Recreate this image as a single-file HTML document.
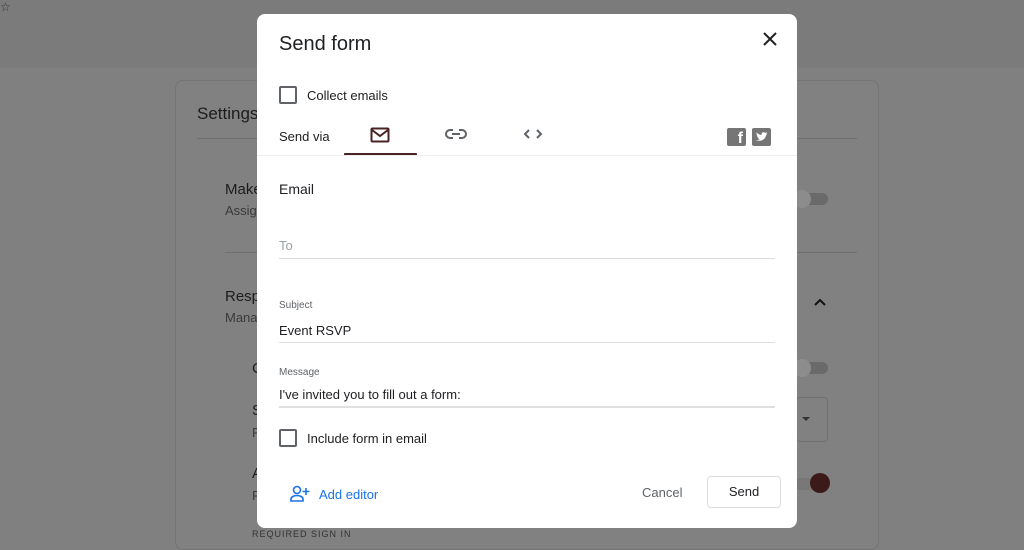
<!DOCTYPE html>
<html><head><meta charset="utf-8"><style>
*{margin:0;padding:0;box-sizing:border-box}
body{width:1024px;height:536px;overflow:hidden;background:#808080;font-family:"Liberation Sans",Arial,sans-serif;position:relative}
.abs{position:absolute}
.top{left:0;top:0;width:1024px;height:68px;background:#7b7b7b}
.card{left:175px;top:80px;width:704px;height:470px;background:#818181;border:1px solid #747474;border-radius:8px}
.t{position:absolute;font-size:15px;color:#1c1c1c}
.s{position:absolute;font-size:13px;color:#3a3a3a}
.hr{position:absolute;height:1px;background:#6f6f6f}
.dlg{left:257px;top:14px;width:540px;height:514px;background:#fff;border-radius:8px;overflow:hidden}
.cb{position:absolute;width:18px;height:18px;border:2px solid #5f6368;border-radius:2px}
.lbl{position:absolute;font-size:13px;color:#202124}
.line{position:absolute;left:22px;width:496px;height:1px;background:#dadce0}
.line2{position:absolute;left:22px;width:496px;height:2px;background:#e0e0e0}
</style></head><body>
<div class="abs top"></div>
<div class="abs" style="left:0;top:0;font-size:12px;color:#333">☆</div>
<div class="abs card"></div>
<div class="t" style="left:197px;top:104px;font-size:17px">Settings</div>
<div class="hr" style="left:197px;top:138px;width:660px"></div>
<div class="t" style="left:225px;top:181px">Make</div>
<div class="s" style="left:225px;top:203px">Assig</div>
<div class="hr" style="left:225px;top:252px;width:632px"></div>
<div class="t" style="left:225px;top:288px">Resp</div>
<div class="s" style="left:225px;top:310px">Mana</div>
<div class="t" style="left:252px;top:360px">C</div>
<div class="t" style="left:252px;top:402px">S</div>
<div class="s" style="left:252px;top:425px">F</div>
<div class="t" style="left:252px;top:465px">A</div>
<div class="s" style="left:252px;top:488px">F</div>
<div class="abs" style="left:792px;top:193px;width:36px;height:12px;border-radius:6px;background:#6a6a6a"></div>
<div class="abs" style="left:793px;top:190px;width:18px;height:18px;border-radius:50%;background:#8c8c8c"></div>
<div class="abs" style="left:792px;top:362px;width:36px;height:12px;border-radius:6px;background:#6a6a6a"></div>
<div class="abs" style="left:793px;top:359px;width:18px;height:18px;border-radius:50%;background:#8c8c8c"></div>
<div class="abs" style="left:796px;top:397px;width:32px;height:45px;border:1px solid #707070;border-radius:4px"></div>
<div class="abs" style="left:802px;top:417px;width:0;height:0;border-left:4px solid transparent;border-right:4px solid transparent;border-top:4px solid #333"></div>
<div class="abs" style="left:792px;top:478px;width:36px;height:12px;border-radius:6px;background:#787878"></div>
<div class="abs" style="left:810px;top:473px;width:20px;height:20px;border-radius:50%;background:#3c1a1a"></div>
<svg class="abs" style="left:813px;top:297px" width="14" height="10"><path d="M2 8 L7 3 L12 8" fill="none" stroke="#111" stroke-width="2"/></svg>

<div class="abs dlg">
  <div class="abs" style="left:22px;top:19px;font-size:20px;color:#202124">Send form</div>
  <svg class="abs" style="left:506px;top:18px" width="14" height="14"><path d="M1 1L13 13M13 1L1 13" stroke="#202124" stroke-width="2"/></svg>
  <div class="cb" style="left:22px;top:72px"></div>
  <div class="lbl" style="left:50px;top:74px">Collect emails</div>
  <div class="lbl" style="left:22px;top:115px">Send via</div>
  <svg class="abs" style="left:113px;top:113px" width="20" height="16"><rect x="1.5" y="1.5" width="17" height="13" rx="1" fill="none" stroke="#4a2424" stroke-width="2"/><path d="M2 3 L10 9 L18 3" fill="none" stroke="#4a2424" stroke-width="2"/></svg>
  <div class="abs" style="left:87px;top:139px;width:73px;height:3px;background:#4a2424;border-radius:1px"></div>
  <svg class="abs" style="left:188px;top:114px" width="22" height="12"><path d="M8 2H5a4 4 0 0 0 0 8h3M14 2h3a4 4 0 0 1 0 8h-3M7 6h8" fill="none" stroke="#5f6368" stroke-width="2"/></svg>
  <svg class="abs" style="left:266px;top:114px" width="20" height="12"><path d="M6 2L2 6L6 10M14 2L18 6L14 10" fill="none" stroke="#5f6368" stroke-width="2"/></svg>
  <div class="abs" style="left:470px;top:114px;width:19px;height:18px;background:#757575;border-radius:2px;color:#fff;font-weight:bold;font-size:16px;text-align:right;padding-right:3px;line-height:21px">f</div>
  <svg class="abs" style="left:495px;top:114px" width="19" height="18"><rect width="19" height="18" rx="2" fill="#757575"/><path d="M4 12c3 1.5 8 1 10-4 0-1 1-2 1.5-2.5l-1.5.3c.5-.5 1-1 1-1.5l-1.8.6c-1.5-1.5-4-.5-3.5 2-2 0-4-1-5-2.5-.5 1 0 2.5 1 3l-1-.2c0 1 1 2 2 2.3h-1c.3 1 1.3 1.5 2.2 1.5-1 .8-2.5 1.2-3.9 1z" fill="#fff"/></svg>
  <div class="abs" style="left:0;top:141px;width:540px;height:1px;background:#eeeeee"></div>
  <div class="abs" style="left:22px;top:167px;font-size:14px;font-weight:500;color:#202124">Email</div>
  <div class="abs" style="left:22px;top:224px;font-size:13px;color:#9aa0a6">To</div>
  <div class="line" style="top:244px"></div>
  <div class="abs" style="left:22px;top:286px;font-size:10px;color:#5f6368">Subject</div>
  <div class="lbl" style="left:22px;top:309px">Event RSVP</div>
  <div class="line" style="top:328px"></div>
  <div class="abs" style="left:22px;top:353px;font-size:10px;color:#5f6368">Message</div>
  <div class="lbl" style="left:22px;top:373px">I've invited you to fill out a form:</div>
  <div class="line2" style="top:392px"></div>
  <div class="cb" style="left:22px;top:415px"></div>
  <div class="lbl" style="left:50px;top:417px">Include form in email</div>
  <svg class="abs" style="left:33px;top:471px" width="22" height="18"><circle cx="7" cy="5" r="3.5" fill="none" stroke="#1a73e8" stroke-width="1.6"/><path d="M1 16v-2c0-2 3-3.5 6-3.5s6 1.5 6 3.5v2z" fill="none" stroke="#1a73e8" stroke-width="1.6"/><path d="M16 3v7M12.5 6.5h7" stroke="#1a73e8" stroke-width="1.6"/></svg>
  <div class="abs" style="left:62px;top:473px;font-size:13px;color:#1a73e8;font-weight:500">Add editor</div>
  <div class="abs" style="left:385px;top:471px;font-size:13px;color:#5f6368">Cancel</div>
  <div class="abs" style="left:450px;top:462px;width:74px;height:32px;border:1px solid #dadce0;border-radius:4px;font-size:13px;color:#202124;text-align:center;line-height:30px">Send</div>
</div>
<div class="abs" style="left:252px;top:529px;font-size:9px;color:#333;letter-spacing:1px">REQUIRED SIGN IN</div>
</body></html>
